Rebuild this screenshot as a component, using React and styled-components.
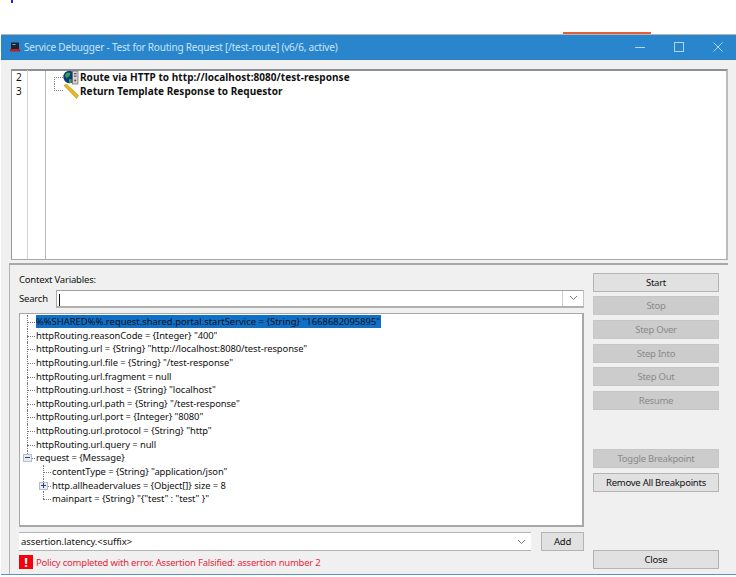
import React from 'react'
import styled, { createGlobalStyle } from 'styled-components'

const GlobalStyle = createGlobalStyle`
  html, body {
    margin: 0;
    background: #fff;
  }
  body {
    font-family: 'Noto Sans', 'Liberation Sans', sans-serif;
    font-size: 9.5px;
    letter-spacing: -0.2px;
    color: #111;
  }
`

const Page = styled.div`
  width: 736px;
  height: 577px;
  overflow: hidden;
  background: #fff;
`

const BlueMark = styled.div`
  width: 2px;
  height: 3px;
  margin-left: 11px;
  background: #2222ee;
`

const BehindStrip = styled.div`
  display: flex;
  height: 2px;
  margin: 29px 0 0 1px;
  border-bottom: 1px solid #b4b4b4;
`

const OrangeEdge = styled.div`
  width: 88px;
  height: 2px;
  margin-left: 562px;
  background: #e2603a;
`

const Window = styled.div`
  margin-left: 1px;
  width: 735px;
  height: 540px;
  background: #f0f0f0;
  border-bottom: 1px solid #5a93bd;
  box-sizing: border-box;
  display: flex;
  flex-direction: column;
`

const TitleBar = styled.div`
  flex: none;
  height: 25px;
  background: #2a86cc;
  border-bottom: 1px solid #2f7fc0;
  box-sizing: border-box;
  display: flex;
  align-items: center;
  padding: 0 13px 0 9px;
`

const TitleText = styled.div`
  margin-left: 4px;
  font-size: 10px;
  letter-spacing: -0.2px;
  color: #c9e3f6;
  flex: 1;
`

const WinButtons = styled.div`
  display: flex;
  gap: 29px;
  color: #acd6f3;
`

const Content = styled.div`
  flex: 1;
  min-height: 0;
  display: flex;
  flex-direction: column;
  width: 727px;
  box-sizing: border-box;
  padding: 9px 0 0 8px;
`

const Editor = styled.div`
  flex: none;
  height: 191px;
  margin-left: 2px;
  background: #fff;
  border-top: 2px solid #8b8f96;
  border-left: 1px solid #9a9a9a;
  border-right: 2px solid #bcbcbc;
  border-bottom: 1px solid #a8a8a8;
  box-sizing: border-box;
  display: flex;
`

const LineNumbers = styled.div`
  width: 16px;
  flex: none;
  margin-top: -1px;
  padding-left: 4px;
  box-sizing: border-box;
  font-size: 10px;
  line-height: 14px;
  height: calc(100% + 1px);
  border-right: 1px solid #d4d4d4;
`

const BreakpointGutter = styled.div`
  width: 17px;
  flex: none;
  border-right: 1px solid #b8b8b8;
`

const Policy = styled.div`
  margin-top: -1px;
  padding-left: 8px;
`

const PolicyRow = styled.div`
  display: flex;
  align-items: center;
  height: 14px;
  font-weight: 700;
  font-size: 10px;
  letter-spacing: 0.05px;
  color: #111;
  white-space: nowrap;
`

const PolicyElbow = styled.span`
  width: 9px;
  height: 7px;
  flex: none;
  box-sizing: border-box;
  align-self: ${p => (p.$first ? 'flex-end' : 'flex-start')};
  border-left: 1px dotted #888;
  border-top: ${p => (p.$first ? '1px dotted #888' : '0')};
  border-bottom: ${p => (p.$first ? '0' : '1px dotted #888')};
`

const PolicyIcon = styled.svg`
  width: 16px;
  height: 15px;
  flex: none;
  margin-right: 1px;
`

const Lower = styled.div`
  flex: 1;
  min-height: 0;
  margin-top: 3px;
  border-top: 2px solid #a9a9a9;
  border-left: 1px solid #b4b4b4;
  box-sizing: border-box;
  display: flex;
  padding: 7px 8px 5px 9px;
  gap: 9px;
`

const LeftColumn = styled.div`
  width: 565px;
  flex: none;
  display: flex;
  flex-direction: column;
`

const Label = styled.div`
  height: 18px;
  line-height: 15px;
`

const SearchRow = styled.div`
  display: flex;
  align-items: center;
  height: 20px;
  margin-top: 1px;
`

const SearchLabel = styled.span`
  width: 37px;
  flex: none;
`

const SearchBox = styled.div`
  flex: 1;
  height: 100%;
  display: flex;
  background: #fff;
  border-top: 1px solid #a0a0a0;
  border-left: 1px solid #a8a8a8;
  border-bottom: 2px solid #b0b0b0;
  border-right: 1px solid #c4c4c4;
  box-sizing: border-box;
`

const Caret = styled.span`
  width: 1px;
  height: 12px;
  margin: 3px 0 0 2px;
  background: #111;
`

const DropArrow = styled.span`
  margin-left: auto;
  width: 20px;
  display: flex;
  align-items: center;
  justify-content: center;
  border-left: ${p => (p.$plain ? '0' : '1px solid #d0d0d0')};
  color: #666;
`

const Tree = styled.div`
  margin-top: 5px;
  height: 214px;
  flex: none;
  background: #fff;
  border: 1px solid #a8a8a8;
  border-right-width: 2px;
  border-bottom-width: 2px;
  box-sizing: border-box;
  padding-top: 1px;
  font-size: 9.4px;
  letter-spacing: -0.08px;
  white-space: nowrap;
`

const TreeRow = styled.div`
  position: relative;
  height: 13.65px;
  line-height: 13.65px;
  padding-left: ${p => 16 + p.$level * 16}px;

  &::before {
    content: '';
    position: absolute;
    left: ${p => 7 + p.$level * 16}px;
    top: 7px;
    width: 8px;
    border-top: 1px dotted #777;
  }

  &::after {
    content: '';
    position: absolute;
    left: ${p => 7 + p.$level * 16}px;
    top: 0;
    height: ${p => (p.$last ? '7px' : '100%')};
    border-left: 1px dotted #777;
  }
`

const RowText = styled.span`
  display: inline-block;
  height: 13px;
  line-height: 13px;
  vertical-align: top;
  color: #111;
  background: ${p => (p.$selected ? '#0f70c8' : 'transparent')};
  letter-spacing: ${p => (p.$selected ? '0.02px' : 'inherit')};
  padding-right: ${p => (p.$selected ? '1px' : '0')};
`

const Expander = styled.span`
  position: absolute;
  z-index: 1;
  left: ${p => 3 + p.$level * 16}px;
  top: 3px;
  width: 9px;
  height: 8px;
  box-sizing: border-box;
  background: #e8ebf2;
  border: 1px solid #b6bcc8;

  &::before {
    content: '';
    position: absolute;
    left: 1px;
    right: 1px;
    top: 2px;
    height: 1px;
    background: #2d3e78;
  }

  &::after {
    content: '';
    display: ${p => (p.$open ? 'none' : 'block')};
    position: absolute;
    left: 3px;
    top: 0;
    height: 5px;
    width: 1px;
    background: #2d3e78;
  }
`

const AddRow = styled.div`
  display: flex;
  margin-top: 5px;
  height: 19px;
  gap: 10px;
`

const ComboBox = styled.div`
  flex: 1;
  display: flex;
  align-items: center;
  background: #fff;
  border-top: 1px solid #b4b4b4;
  border-bottom: 1px solid #b4b4b4;
  box-sizing: border-box;
  padding-left: 2px;
  letter-spacing: -0.08px;
`

const StatusRow = styled.div`
  display: flex;
  align-items: center;
  height: 15px;
  margin-top: 4px;
  gap: 3px;
  color: #e8263c;
  letter-spacing: -0.22px;
  white-space: nowrap;
`

const ErrorBadge = styled.span`
  width: 14px;
  height: 14px;
  flex: none;
  background: #f4000c;
  color: #fff;
  font-weight: 700;
  font-size: 13px;
  line-height: 14px;
  text-align: center;
`

const Actions = styled.div`
  flex: 1;
  display: flex;
  flex-direction: column;
  padding-top: 0.5px;
`

const ActionButton = styled.div`
  height: 19px;
  flex: none;
  margin-top: ${p => p.$gap ?? 4.7}px;
  width: ${p => p.$width ?? '126px'};
  box-sizing: border-box;
  display: flex;
  align-items: center;
  justify-content: center;
  letter-spacing: -0.25px;
  background: ${p => (p.$disabled ? '#cccccc' : '#e1e1e1')};
  border: 1px solid ${p => (p.$disabled ? '#c6c6c6' : '#b4b4b4')};
  color: ${p => (p.$disabled ? '#8a8a8a' : '#111')};
`

const treeRows = [
  { level: 0, text: '%%SHARED%%.request.shared.portal.startService = {String} "1668682095895"', selected: true },
  { level: 0, text: 'httpRouting.reasonCode = {Integer} "400"' },
  { level: 0, text: 'httpRouting.url = {String} "http://localhost:8080/test-response"' },
  { level: 0, text: 'httpRouting.url.file = {String} "/test-response"' },
  { level: 0, text: 'httpRouting.url.fragment = null' },
  { level: 0, text: 'httpRouting.url.host = {String} "localhost"' },
  { level: 0, text: 'httpRouting.url.path = {String} "/test-response"' },
  { level: 0, text: 'httpRouting.url.port = {Integer} "8080"' },
  { level: 0, text: 'httpRouting.url.protocol = {String} "http"' },
  { level: 0, text: 'httpRouting.url.query = null' },
  { level: 0, text: 'request = {Message}', expander: 'open', last: true },
  { level: 1, text: 'contentType = {String} "application/json"' },
  { level: 1, text: 'http.allheadervalues = {Object[]} size = 8', expander: 'closed' },
  { level: 1, text: 'mainpart = {String} "{"test" : "test" }"', last: true },
]

function Chevron() {
  return (
    <svg width="9" height="6" viewBox="0 0 9 6">
      <path d="M1 1l3.5 3.5L8 1" fill="none" stroke="#777" />
    </svg>
  )
}

function App() {
  return (
    <Page>
      <GlobalStyle />
      <BlueMark />
      <BehindStrip>
        <OrangeEdge />
      </BehindStrip>
      <Window>
        <TitleBar>
          <svg width="10" height="10" viewBox="0 0 10 10">
            <rect x="1" y="0.5" width="8" height="6.5" fill="#1d2430" />
            <rect x="2.5" y="2" width="3" height="1" fill="#8fa0b5" />
            <rect x="0" y="7" width="10" height="2.5" fill="#b3202c" />
          </svg>
          <TitleText>Service Debugger - Test for Routing Request [/test-route] (v6/6, active)</TitleText>
          <WinButtons>
            <svg width="10" height="10" viewBox="0 0 10 10">
              <path d="M0 5.5h10" stroke="currentColor" />
            </svg>
            <svg width="10" height="10" viewBox="0 0 10 10">
              <rect x="0.5" y="0.5" width="9" height="9" fill="none" stroke="currentColor" />
            </svg>
            <svg width="10" height="10" viewBox="0 0 10 10">
              <path d="M0.5 0.5l9 9M9.5 0.5l-9 9" stroke="currentColor" />
            </svg>
          </WinButtons>
        </TitleBar>
        <Content>
          <Editor>
            <LineNumbers>
              <div>2</div>
              <div>3</div>
            </LineNumbers>
            <BreakpointGutter />
            <Policy>
              <PolicyRow>
                <PolicyElbow $first />
                <PolicyIcon viewBox="0 0 16 15">
                  <circle cx="6.5" cy="7" r="6.2" fill="#12357c" />
                  <path d="M3 3.5c2-1.5 3.5-1 4.5 0L6 6.5 3.5 8 2 6zM6 9l3 .5L8 13l-2 .5z" fill="#2fa84a" />
                  <rect x="9.5" y="1" width="5.5" height="13" fill="#d4d4d4" stroke="#666" strokeWidth="0.7" />
                  <rect x="11" y="3" width="2.5" height="1.2" fill="#555" />
                  <rect x="11" y="5.5" width="2.5" height="1.2" fill="#555" />
                  <circle cx="12.2" cy="10.5" r="1" fill="#b3202c" />
                </PolicyIcon>
                Route via HTTP to http://localhost:8080/test-response
              </PolicyRow>
              <PolicyRow>
                <PolicyElbow />
                <PolicyIcon viewBox="0 0 16 15">
                  <path d="M1 1.5l2.5-1.5 12 11.5-2 3z" fill="#e7b81c" stroke="#a98412" strokeWidth="0.5" />
                </PolicyIcon>
                Return Template Response to Requestor
              </PolicyRow>
            </Policy>
          </Editor>
          <Lower>
            <LeftColumn>
              <Label>Context Variables:</Label>
              <SearchRow>
                <SearchLabel>Search</SearchLabel>
                <SearchBox>
                  <Caret />
                  <DropArrow>
                    <Chevron />
                  </DropArrow>
                </SearchBox>
              </SearchRow>
              <Tree>
                {treeRows.map(row => (
                  <TreeRow key={row.text} $level={row.level} $last={row.last}>
                    {row.expander && <Expander $level={row.level} $open={row.expander === 'open'} />}
                    <RowText $selected={row.selected}>{row.text}</RowText>
                  </TreeRow>
                ))}
              </Tree>
              <AddRow>
                <ComboBox>
                  assertion.latency.&lt;suffix&gt;
                  <DropArrow $plain>
                    <Chevron />
                  </DropArrow>
                </ComboBox>
                <ActionButton $gap={0} $width="43px">Add</ActionButton>
              </AddRow>
              <StatusRow>
                <ErrorBadge>!</ErrorBadge>
                Policy completed with error. Assertion Falsified: assertion number 2
              </StatusRow>
            </LeftColumn>
            <Actions>
              <ActionButton $gap={0}>Start</ActionButton>
              <ActionButton $disabled>Stop</ActionButton>
              <ActionButton $disabled>Step Over</ActionButton>
              <ActionButton $disabled>Step Into</ActionButton>
              <ActionButton $disabled>Step Out</ActionButton>
              <ActionButton $disabled>Resume</ActionButton>
              <ActionButton $disabled $gap={39}>Toggle Breakpoint</ActionButton>
              <ActionButton>Remove All Breakpoints</ActionButton>
              <ActionButton $gap={58}>Close</ActionButton>
            </Actions>
          </Lower>
        </Content>
      </Window>
    </Page>
  )
}

export default App
